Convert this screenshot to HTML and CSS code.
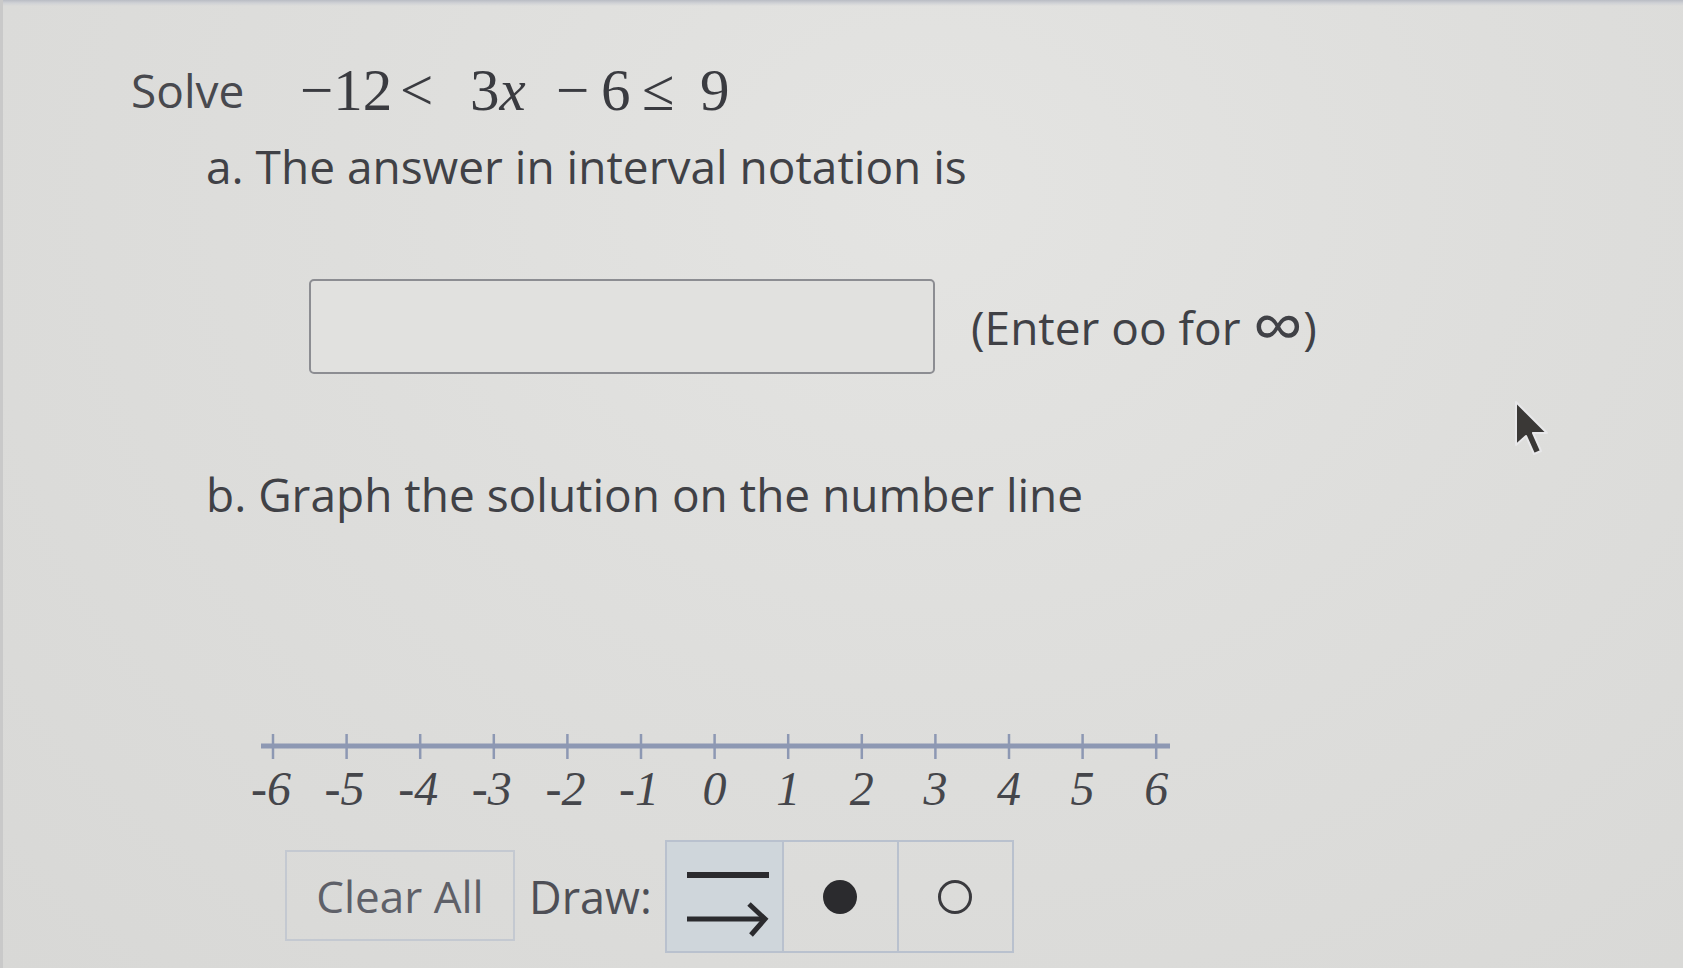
FILE: index.html
```html
<!DOCTYPE html>
<html>
<head>
<meta charset="utf-8">
<link rel="stylesheet" href="styles.css">
</head>
<body>
<div class="screen">
  <div class="page">
    <div class="solve-row">
      <span class="solve-word">Solve</span>
      <span class="math">
        <span class="tok t1">−12</span>
        <span class="tok t2">&lt;</span>
        <span class="tok t3">3<i>x</i></span>
        <span class="tok t4">−</span>
        <span class="tok t5">6</span>
        <span class="tok t6">≤</span>
        <span class="tok t7">9</span>
      </span>
    </div>
    <div class="part part-a">a. The answer in interval notation is</div>
    <div class="answer-row">
      <div class="answer-box"></div>
      <span class="hint">(Enter oo for <span class="inf">∞</span>)</span>
    </div>
    <div class="part part-b">b. Graph the solution on the number line</div>
    <svg class="numberline" width="960" height="100" viewBox="0 0 960 100">
      <line x1="21" y1="26" x2="930" y2="26" stroke="#8d98b3" stroke-width="5"/>
      <g stroke="#8d98b3" stroke-width="2.5">
        <line x1="33" y1="14" x2="33" y2="39"/>
        <line x1="106.6" y1="14" x2="106.6" y2="39"/>
        <line x1="180.2" y1="14" x2="180.2" y2="39"/>
        <line x1="253.8" y1="14" x2="253.8" y2="39"/>
        <line x1="327.4" y1="14" x2="327.4" y2="39"/>
        <line x1="401" y1="14" x2="401" y2="39"/>
        <line x1="474.6" y1="14" x2="474.6" y2="39"/>
        <line x1="548.2" y1="14" x2="548.2" y2="39"/>
        <line x1="621.8" y1="14" x2="621.8" y2="39"/>
        <line x1="695.4" y1="14" x2="695.4" y2="39"/>
        <line x1="769" y1="14" x2="769" y2="39"/>
        <line x1="842.6" y1="14" x2="842.6" y2="39"/>
        <line x1="916.2" y1="14" x2="916.2" y2="39"/>
      </g>
      <g class="nl-labels" text-anchor="middle">
        <text x="31" y="85">-6</text>
        <text x="104.6" y="85">-5</text>
        <text x="178.2" y="85">-4</text>
        <text x="251.8" y="85">-3</text>
        <text x="325.4" y="85">-2</text>
        <text x="399" y="85">-1</text>
        <text x="474.6" y="85">0</text>
        <text x="548.2" y="85">1</text>
        <text x="621.8" y="85">2</text>
        <text x="695.4" y="85">3</text>
        <text x="769" y="85">4</text>
        <text x="842.6" y="85">5</text>
        <text x="916.2" y="85">6</text>
      </g>
    </svg>
    <div class="tools">
      <div class="clear-btn">Clear All</div>
      <span class="draw-label">Draw:</span>
      <div class="draw-group">
        <div class="draw-btn active">
          <svg width="90" height="80" viewBox="0 0 90 80">
            <line x1="8" y1="18" x2="90" y2="18" stroke="#2b2b2e" stroke-width="6"/>
            <line x1="8" y1="62" x2="84" y2="62" stroke="#2b2b2e" stroke-width="5"/>
            <polyline points="70,47 86,62 72,78" fill="none" stroke="#2b2b2e" stroke-width="5"/>
          </svg>
        </div>
        <div class="draw-btn">
          <svg width="40" height="40" viewBox="0 0 40 40"><circle cx="20" cy="20" r="17" fill="#2b2b2e"/></svg>
        </div>
        <div class="draw-btn">
          <svg width="40" height="40" viewBox="0 0 40 40"><circle cx="20" cy="20" r="15.5" fill="none" stroke="#3a3a3e" stroke-width="3"/></svg>
        </div>
      </div>
    </div>
  </div>
  <svg class="cursor" width="40" height="60" viewBox="0 0 40 60">
    <path d="M3 3 L3 46 L13 37 L21 55 L28 52 L20 34 L34 34 Z" fill="#3a3836" stroke="#e8e8ea" stroke-width="2" stroke-linejoin="round"/>
  </svg>
</div>
</body>
</html>
```
FILE: styles.css
```css
html, body {
  margin: 0;
  padding: 0;
}
body {
  width: 1683px;
  height: 968px;
  overflow: hidden;
  background: #dcdcda;
  font-family: "Open Sans", "DejaVu Sans", sans-serif;
  color: #45464b;
}
.screen {
  position: relative;
  width: 1683px;
  height: 968px;
  background:
    linear-gradient(180deg, #b9bcc4 0, #cfd1d5 3px, rgba(0,0,0,0) 6px),
    radial-gradient(ellipse at 55% 20%, #e4e4e2 0%, #dededc 45%, #d8d8d6 100%);
  border-left: 3px solid #c9c9c9;
  box-sizing: border-box;
}
.page {
  padding: 58px 0 0 128px;
}
.solve-row {
  display: flex;
  align-items: center;
  height: 64px;
}
.solve-word {
  font-size: 46px;
  width: 169px;
  color: #48494e;
  font-weight: 500;
}
.math {
  display: grid;
  grid-template-columns: 100px 70px 86px 45px 41px 58px auto;
  font-family: "Liberation Serif", "Times New Roman", serif;
  font-size: 59px;
  color: #3a3b40;
  line-height: 64px;
}
.math i {
  font-style: italic;
}
.part {
  font-size: 46px;
  line-height: 60px;
  margin-left: 75px;
  color: #404146;
  font-weight: 500;
}
.part-a {
  margin-top: 14px;
}
.answer-row {
  display: flex;
  align-items: center;
  margin-top: 83px;
  margin-left: 178px;
  gap: 36px;
}
.answer-box {
  width: 622px;
  height: 91px;
  border: 2px solid #8c8d92;
  border-radius: 5px;
  background: #e1e1df;
}
.hint {
  font-size: 46px;
  color: #404146;
  font-weight: 500;
}
.inf {
  font-size: 72px;
  line-height: 40px;
  font-weight: 400;
  vertical-align: -7px;
}
.part-b {
  margin-top: 90px;
}
.numberline {
  display: block;
  margin-top: 196px;
  margin-left: 109px;
}
.nl-labels {
  font-family: "Liberation Serif", "Times New Roman", serif;
  font-style: italic;
  font-size: 48px;
  fill: #45464b;
}
.tools {
  display: flex;
  align-items: center;
  margin-top: 20px;
  margin-left: 154px;
  height: 113px;
}
.clear-btn {
  box-sizing: border-box;
  width: 230px;
  height: 91px;
  border: 2px solid #c4c9d1;
  display: flex;
  align-items: center;
  justify-content: center;
  font-size: 44px;
  color: #5e6068;
  margin-top: -2px;
}
.draw-label {
  font-size: 45px;
  color: #4e4f56;
  margin-left: 14px;
  margin-right: 13px;
}
.draw-group {
  display: flex;
  border: 2px solid #b9c1ce;
  height: 113px;
  box-sizing: border-box;
}
.draw-btn {
  width: 113px;
  display: flex;
  align-items: center;
  justify-content: center;
  border-left: 2px solid #b9c1ce;
}
.draw-btn:first-child {
  border-left: none;
  background: #cfd6db;
  width: 115px;
}
.cursor {
  position: absolute;
  left: 1510px;
  top: 399px;
}
```
